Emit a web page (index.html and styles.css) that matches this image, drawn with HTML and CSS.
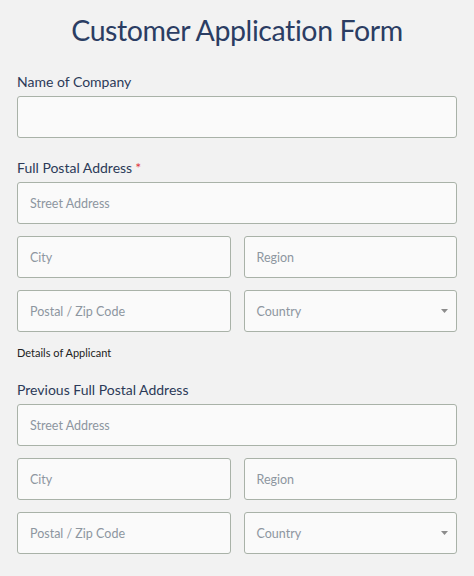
FILE: index.html
```html
<!DOCTYPE html>
<html>
<head>
<meta charset="utf-8">
<link rel="stylesheet" href="styles.css">
</head>
<body>
<div class="form">
  <h1 class="title">Customer Application Form</h1>

  <label class="label first">Name of Company</label>
  <input class="field" type="text">

  <label class="label">Full Postal Address<span class="req">*</span></label>
  <div class="group">
    <input class="field" type="text" placeholder="Street Address">
    <div class="row">
      <input class="field" type="text" placeholder="City">
      <input class="field" type="text" placeholder="Region">
    </div>
    <div class="row">
      <input class="field" type="text" placeholder="Postal / Zip Code">
      <div class="field select"><span>Country</span><svg class="caret" width="7" height="4" viewBox="0 0 7 4"><path d="M0 0h7L3.5 4z" fill="#8c8c8c"/></svg></div>
    </div>
  </div>

  <div class="note">Details of Applicant</div>

  <label class="label prev">Previous Full Postal Address</label>
  <div class="group">
    <input class="field" type="text" placeholder="Street Address">
    <div class="row">
      <input class="field" type="text" placeholder="City">
      <input class="field" type="text" placeholder="Region">
    </div>
    <div class="row">
      <input class="field" type="text" placeholder="Postal / Zip Code">
      <div class="field select"><span>Country</span><svg class="caret" width="7" height="4" viewBox="0 0 7 4"><path d="M0 0h7L3.5 4z" fill="#8c8c8c"/></svg></div>
    </div>
  </div>
</div>
</body>
</html>
```

FILE: styles.css
```css
html, body {
  margin: 0;
  padding: 0;
  background: #f2f2f2;
}
body {
  width: 474px;
  height: 576px;
  overflow: hidden;
  font-family: "Lato", "Open Sans", sans-serif;
}
.form {
  display: flex;
  flex-direction: column;
  padding: 0 17px 0 17px;
}
.title {
  margin: 10px 0 0 0;
  height: 40px;
  line-height: 40px;
  font-size: 28.5px;
  letter-spacing: -0.4px;
  font-weight: 400;
  text-align: center;
  color: #2b3d63;
}
.label {
  display: block;
  height: 20px;
  line-height: 20px;
  font-size: 14px;
  color: #2c3a58;
  margin: 20px 0 4px 0;
}
.label.first {
  margin-top: 22px;
}
.label.prev {
  margin-top: 19px;
}
.req {
  color: #e0383e;
  margin-left: 3px;
}
.group {
  display: flex;
  flex-direction: column;
  gap: 12px;
}
.row {
  display: grid;
  grid-template-columns: 1fr 1fr;
  column-gap: 13px;
}
.field {
  box-sizing: border-box;
  height: 42px;
  width: 100%;
  margin: 0;
  border: 1px solid #a9b2a8;
  border-radius: 3px;
  background: #fafafa;
  padding: 0 12px;
  font-family: "Lato", "Open Sans", sans-serif;
  font-size: 12.5px;
  color: #333;
  outline: none;
}
.field::placeholder {
  color: #8d96a0;
}
.select {
  display: flex;
  align-items: center;
  justify-content: space-between;
  color: #8d96a0;
}
.caret {
  margin-right: -4px;
}
.note {
  height: 16px;
  line-height: 16px;
  margin-top: 13px;
  font-size: 11px;
  color: #222;
}
```
